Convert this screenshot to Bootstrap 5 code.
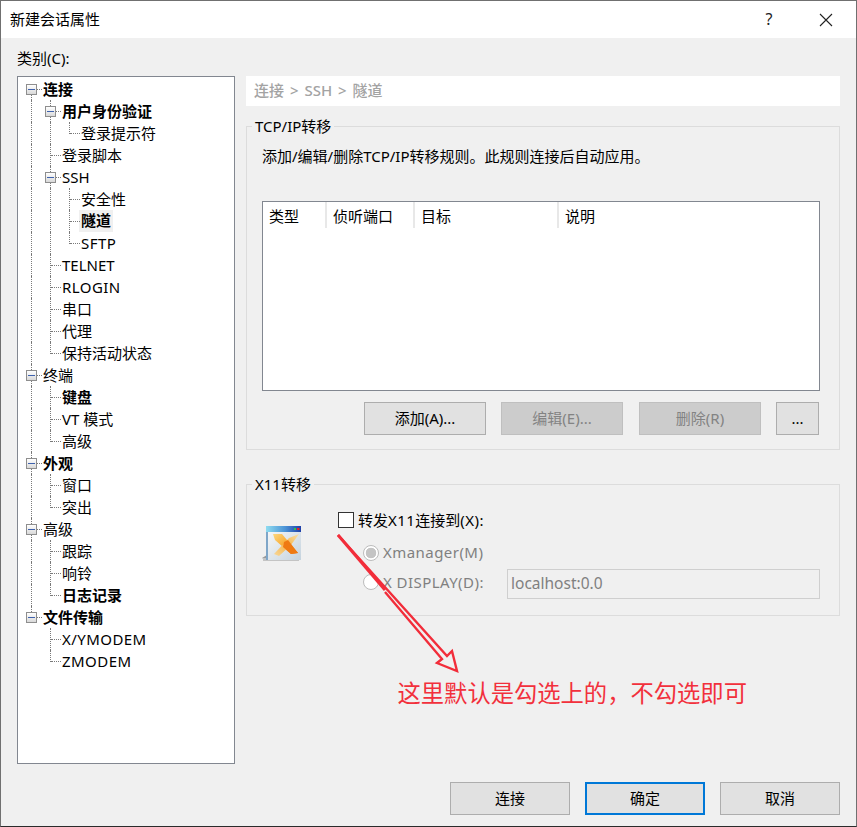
<!DOCTYPE html>
<html lang="zh-CN">
<head>
<meta charset="utf-8">
<title>新建会话属性</title>
<link href="https://cdn.jsdelivr.net/npm/bootstrap@5.3.0/dist/css/bootstrap.min.css" rel="stylesheet">
<style>
html,body{margin:0;padding:0;background:#f0f0f0;}
body{font:15px/20px "Noto Sans","Noto Sans CJK SC",sans-serif;color:#000;width:857px;height:827px;overflow:hidden;}
.dlg-win{position:relative;width:857px;height:827px;background:#f0f0f0;border:1px solid #707070;border-bottom-color:#2b2b2b;}
.dlg-title{height:37px;background:#fff;padding-left:9px;}
.dlg-name{margin-top:-1px;}
.dlg-help{width:22px;text-align:center;font-size:16px;color:#222;margin-right:39px;margin-top:-2px;}
.dlg-close{margin-right:23px;}
.dlg-body{padding:0 16px;}
.cat-label{margin:10px 0 6px;height:22px;}
.tree-box{width:218px;height:688px;background:#fff;border:1px solid #828790;padding:1px 0 0 4px;flex:none;}
.tree-row{height:22px;white-space:nowrap;}
.tg{position:relative;width:19px;height:22px;flex:none;}
.tg-v::before,.tg-t::before,.tg-m::before{content:"";position:absolute;left:9px;top:0;bottom:0;border-left:1px dotted #7a7a7a;}
.tg-l::before{content:"";position:absolute;left:9px;top:0;height:12px;border-left:1px dotted #7a7a7a;}
.tg-first::before{top:12px;}
.tg-last::before{bottom:10px;}
.tg-t::after,.tg-l::after,.tg-m::after{content:"";position:absolute;left:10px;right:-1px;top:11px;border-top:1px dotted #7a7a7a;}
.tg-box{position:absolute;z-index:1;left:4px;top:6px;width:11px;height:11px;border:1px solid #8e8e8e;background:linear-gradient(#fff,#d9d9d9);}
.tg-box::after{content:"";position:absolute;left:1px;right:1px;top:4px;height:1px;background:#3f62ad;}
.tree-txt{padding:1px 0 0 2px;}
.tree-sel{background:#f0f0f0;padding:0 2px;display:inline-block;height:22px;}
.tree-b{font-weight:700;}
.lat{letter-spacing:.45px;}
.side-col{width:594px;margin-left:11px;flex:none;}
.crumb{height:30px;background:#fff;color:#a3a3a3;padding:4px 8px;font-weight:500;margin-bottom:20px;word-spacing:2px;}
.grp{position:relative;border:1px solid #dcdcdc;}
.grp-legend{position:absolute;left:5px;top:-11px;padding:0 3px;background:#f0f0f0;}
.grp-tcp{height:324px;padding:19px 19px 0 15px;margin-bottom:34px;}
.grp-x11{height:132px;padding:27px 19px 0 15px;}
.lv{height:190px;margin-top:35px;background:#fff;border:1px solid #828790;}
.lv-cell{height:26px;padding:4px 0 0 6px;border-right:2px solid #e8e8e8;flex:none;}
.lv-c1{width:64px;}
.lv-c2{width:88px;}
.lv-c3{width:144px;}
.lv-c4{border-right:0;}
.btn.dlg-btn{font-size:15px;line-height:20px;border-radius:0;background:#e1e1e1;border:1px solid #adadad;color:#000;height:33px;flex:none;padding:0 0 2px;}
.btn.dlg-btn:disabled{background:#cccccc;border-color:#bfbfbf;color:#838383;opacity:1;}
.btn.dlg-def{border:2px solid #0078d7;}
.bw122{width:122px;}
.bw43{width:43px;}
.bw120{width:120px;}
.tool-row{margin-top:11px;margin-right:1px;gap:15px;}
.tool-gap{margin-left:1px;}
.ico-col{width:76px;flex:none;padding-top:13px;}
.opt-row{height:16px;}
.form-check-input.sq{width:16px;height:16px;margin:0 4px 0 0;border:1px solid #333;border-radius:0;background-color:#fff;flex:none;}
.form-check-input.rd{width:16px;height:16px;margin:0 4px 0 0;border:1px solid #bcbcbc;background-color:#fff;flex:none;opacity:1;}
.form-check-input.rd:checked{background-color:#fff;background-image:radial-gradient(circle,#c4c4c4 0 5px,#fff 5.6px);border-color:#bcbcbc;}
.dis-txt{color:#808080;}
.rad-1{margin:17px 0 0 25px;height:16px;}
.rad-1 .dis-txt{margin-top:-2px;}
.rad-2{margin:8px 0 0 25px;height:30px;}
.rad-2 .rd{margin-top:-4px;}
.rad-2 .dis-txt{margin-top:-5px;width:124px;flex:none;}
.form-control.host{width:313px;height:30px;flex:none;border:1px solid #cfcfcf;border-radius:0;background:#f0f0f0;color:#808080;font-size:15.5px;padding:0 3px 2px;line-height:26px;}
.foot-row{margin-top:18px;gap:15px;}
.note-svg{position:absolute;left:0;top:0;pointer-events:none;}
.note-txt{position:absolute;left:396.5px;top:675px;font-size:23.3px;line-height:32px;color:#f2303c;white-space:nowrap;font-family:"Noto Sans CJK SC",sans-serif;}
</style>
</head>
<body>
<div class="dlg-win">
  <div class="dlg-title d-flex align-items-center justify-content-between">
    <span class="dlg-name">新建会话属性</span>
    <div class="d-flex align-items-center">
      <span class="dlg-help">?</span>
      <svg class="dlg-close" width="14" height="14" viewBox="0 0 14 14"><path d="M1 1 L13 13 M13 1 L1 13" stroke="#222" stroke-width="1.1" fill="none"/></svg>
    </div>
  </div>
  <div class="dlg-body">
    <div class="cat-label">类别(C):</div>
    <div class="d-flex">
      <div class="tree-box">
        <div class="tree-row d-flex"><span class="tg tg-m tg-first"><i class="tg-box"></i></span><span class="tree-txt tree-b">连接</span></div>
        <div class="tree-row d-flex"><span class="tg tg-v"></span><span class="tg tg-m"><i class="tg-box"></i></span><span class="tree-txt tree-b">用户身份验证</span></div>
        <div class="tree-row d-flex"><span class="tg tg-v"></span><span class="tg tg-v"></span><span class="tg tg-l"></span><span class="tree-txt">登录提示符</span></div>
        <div class="tree-row d-flex"><span class="tg tg-v"></span><span class="tg tg-t"></span><span class="tree-txt">登录脚本</span></div>
        <div class="tree-row d-flex"><span class="tg tg-v"></span><span class="tg tg-m"><i class="tg-box"></i></span><span class="tree-txt">SSH</span></div>
        <div class="tree-row d-flex"><span class="tg tg-v"></span><span class="tg tg-v"></span><span class="tg tg-t"></span><span class="tree-txt">安全性</span></div>
        <div class="tree-row d-flex"><span class="tg tg-v"></span><span class="tg tg-v"></span><span class="tg tg-t"></span><span class="tree-sel tree-b">隧道</span></div>
        <div class="tree-row d-flex"><span class="tg tg-v"></span><span class="tg tg-v"></span><span class="tg tg-l"></span><span class="tree-txt lat">SFTP</span></div>
        <div class="tree-row d-flex"><span class="tg tg-v"></span><span class="tg tg-t"></span><span class="tree-txt">TELNET</span></div>
        <div class="tree-row d-flex"><span class="tg tg-v"></span><span class="tg tg-t"></span><span class="tree-txt lat">RLOGIN</span></div>
        <div class="tree-row d-flex"><span class="tg tg-v"></span><span class="tg tg-t"></span><span class="tree-txt">串口</span></div>
        <div class="tree-row d-flex"><span class="tg tg-v"></span><span class="tg tg-t"></span><span class="tree-txt">代理</span></div>
        <div class="tree-row d-flex"><span class="tg tg-v"></span><span class="tg tg-l"></span><span class="tree-txt">保持活动状态</span></div>
        <div class="tree-row d-flex"><span class="tg tg-m"><i class="tg-box"></i></span><span class="tree-txt">终端</span></div>
        <div class="tree-row d-flex"><span class="tg tg-v"></span><span class="tg tg-t"></span><span class="tree-txt tree-b">键盘</span></div>
        <div class="tree-row d-flex"><span class="tg tg-v"></span><span class="tg tg-t"></span><span class="tree-txt">VT 模式</span></div>
        <div class="tree-row d-flex"><span class="tg tg-v"></span><span class="tg tg-l"></span><span class="tree-txt">高级</span></div>
        <div class="tree-row d-flex"><span class="tg tg-m"><i class="tg-box"></i></span><span class="tree-txt tree-b">外观</span></div>
        <div class="tree-row d-flex"><span class="tg tg-v"></span><span class="tg tg-t"></span><span class="tree-txt">窗口</span></div>
        <div class="tree-row d-flex"><span class="tg tg-v"></span><span class="tg tg-l"></span><span class="tree-txt">突出</span></div>
        <div class="tree-row d-flex"><span class="tg tg-m"><i class="tg-box"></i></span><span class="tree-txt">高级</span></div>
        <div class="tree-row d-flex"><span class="tg tg-v"></span><span class="tg tg-t"></span><span class="tree-txt">跟踪</span></div>
        <div class="tree-row d-flex"><span class="tg tg-v"></span><span class="tg tg-t"></span><span class="tree-txt">响铃</span></div>
        <div class="tree-row d-flex"><span class="tg tg-v"></span><span class="tg tg-l"></span><span class="tree-txt tree-b">日志记录</span></div>
        <div class="tree-row d-flex"><span class="tg tg-m tg-last"><i class="tg-box"></i></span><span class="tree-txt tree-b">文件传输</span></div>
        <div class="tree-row d-flex"><span class="tg"></span><span class="tg tg-t"></span><span class="tree-txt lat">X/YMODEM</span></div>
        <div class="tree-row d-flex"><span class="tg"></span><span class="tg tg-l"></span><span class="tree-txt lat">ZMODEM</span></div>
      </div>
      <div class="side-col">
        <div class="crumb">连接 &gt; SSH &gt; 隧道</div>
        <div class="grp grp-tcp">
          <div class="grp-legend">TCP/IP转移</div>
          <div>添加/编辑/删除TCP/IP转移规则。此规则连接后自动应用。</div>
          <div class="lv">
            <div class="d-flex">
              <div class="lv-cell lv-c1">类型</div>
              <div class="lv-cell lv-c2">侦听端口</div>
              <div class="lv-cell lv-c3">目标</div>
              <div class="lv-cell lv-c4">说明</div>
            </div>
          </div>
          <div class="tool-row d-flex justify-content-end">
            <button type="button" class="btn dlg-btn bw122">添加(A)...</button>
            <button type="button" class="btn dlg-btn bw122" disabled>编辑(E)...</button>
            <button type="button" class="btn dlg-btn bw122 tool-gap" disabled>删除(R)</button>
            <button type="button" class="btn dlg-btn bw43">...</button>
          </div>
        </div>
        <div class="grp grp-x11 d-flex">
          <div class="grp-legend">X11转移</div>
          <div class="ico-col">
            <svg width="42" height="37" viewBox="0 0 42 37">
              <defs>
                <linearGradient id="ibar" x1="0" x2="1" y1="0" y2="0"><stop offset="0" stop-color="#8fdcf0"/><stop offset=".55" stop-color="#4b93d6"/><stop offset="1" stop-color="#1f3fa8"/></linearGradient>
                <linearGradient id="ipane" x1="0" x2="1" y1="0" y2="1"><stop offset="0" stop-color="#fbfbfb"/><stop offset="1" stop-color="#c5d3de"/></linearGradient>
                <linearGradient id="ix1" x1="0" x2="1" y1="0" y2="1"><stop offset="0" stop-color="#fcd77f"/><stop offset=".55" stop-color="#f8a428"/><stop offset="1" stop-color="#ec6a0a"/></linearGradient>
                <linearGradient id="ix2" x1="1" x2="0" y1="0" y2="1"><stop offset="0" stop-color="#f9dfa6"/><stop offset=".5" stop-color="#f6b64e"/><stop offset="1" stop-color="#f7d89a"/></linearGradient>
              </defs>
              <path d="M0 33 L5 30 L5 36 Z" fill="#9a9a9a"/>
              <rect x="1" y="33" width="36" height="3" fill="#c4c4c4"/>
              <rect x="4" y="1" width="35" height="34" fill="url(#ipane)"/>
              <rect x="4" y="1" width="2" height="34" fill="#7fa6c8"/>
              <rect x="4" y="1" width="35" height="6" fill="url(#ibar)"/>
              <rect x="32" y="3" width="2" height="2" fill="#35c04a"/>
              <rect x="35" y="3" width="2.5" height="2" fill="#e0282c"/>
              <path d="M11 9 L20 9 L25 15 L36 28 L29 29 L21 22 L13 15 Z" fill="url(#ix1)"/>
              <path d="M37 9 L27 13 L12 29 L17 31 L29 20 Z" fill="url(#ix2)"/>
              <path d="M22 17 L26 15 L36 28 L29 29 L21 22 Z" fill="#ef7a12"/>
            </svg>
          </div>
          <div class="flex-grow-1">
            <label class="opt-row d-flex align-items-center"><input class="form-check-input sq" type="checkbox"><span>转发<span class="lat">X11</span>连接到<span class="lat">(X):</span></span></label>
            <div class="rad-1 d-flex align-items-center"><input class="form-check-input rd" type="radio" name="xd" checked disabled><span class="dis-txt lat">Xmanager(M)</span></div>
            <div class="rad-2 d-flex align-items-center"><input class="form-check-input rd" type="radio" name="xd" disabled><span class="dis-txt lat">X DISPLAY(D):</span><input class="form-control host" type="text" value="localhost:0.0" disabled></div>
          </div>
        </div>
      </div>
    </div>
    <div class="foot-row d-flex justify-content-end">
      <button type="button" class="btn dlg-btn bw120">连接</button>
      <button type="button" class="btn dlg-btn dlg-def bw120">确定</button>
      <button type="button" class="btn dlg-btn bw120">取消</button>
    </div>
  </div>
  <svg class="note-svg" width="857" height="827" viewBox="1 1 857 827">
    <path d="M338 535 L447 656 L452 651 L457 671 L437 663 L442 659 L385 592" fill="none" stroke="#f22d3a" stroke-width="2.4"/>
    <path d="M338 535 L385 590" stroke="#f22d3a" stroke-width="3" fill="none"/>
  </svg>
  <div class="note-txt">这里默认是勾选上的，不勾选即可</div>
</div>
<script src="https://cdn.jsdelivr.net/npm/bootstrap@5.3.0/dist/js/bootstrap.bundle.min.js"></script>
</body>
</html>
